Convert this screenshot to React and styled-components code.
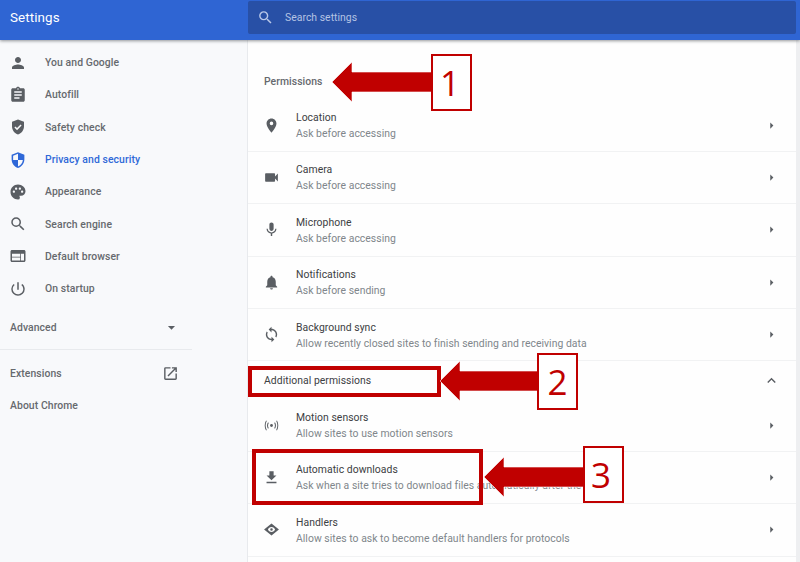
import React from "react";
import styled, { createGlobalStyle } from "styled-components";
import {
  MdPerson, MdAssignment, MdPalette, MdSearch, MdPowerSettingsNew, MdOpenInNew,
  MdLocationOn, MdVideocam, MdMic, MdNotifications, MdSync, MdFileDownload,
  MdArrowRight, MdExpandLess, MdArrowDropDown,
} from "react-icons/md";

const Global = createGlobalStyle`
  html, body { margin: 0; padding: 0; background: #fff; }
  body { font-family: Roboto, "Liberation Sans", sans-serif; overflow: hidden; }
  * { box-sizing: border-box; }
`;

const Page = styled.div`
  position: relative;
  width: 800px;
  height: 562px;
  overflow: hidden;
  display: flex;
  flex-direction: column;
`;
const Header = styled.header`
  height: 40px;
  flex: none;
  background: #2f65d3;
  display: flex;
  box-shadow: 0 1px 3px rgba(60, 64, 67, 0.55);
  position: relative;
  z-index: 2;
`;
const Brand = styled.div`
  width: 248px;
  padding: 9px 0 0 10px;
  color: #fff;
  font-size: 13.4px;
  line-height: 17px;
  letter-spacing: 0.1px;
`;
const SearchBox = styled.div`
  width: 548px;
  height: 33px;
  margin-top: 1px;
  background: #2850a6;
  border-radius: 2px;
  display: flex;
  align-items: center;
  padding-left: 9px;
  gap: 11px;
  color: #b4c3e4;
  font-size: 10.4px;
  letter-spacing: 0.03px;
  svg { color: #b9c8e8; }
`;
const Body = styled.div`
  flex: 1;
  display: flex;
  min-height: 0;
`;
const Sidebar = styled.nav`
  width: 248px;
  background: #f8f9fb;
  padding-top: 6.5px;
  border-right: 1px solid #e8eaed;
  color: #5f6368;
`;
const NavRow = styled.div`
  height: 32.3px;
  display: flex;
  align-items: center;
  padding-left: 9px;
  gap: 19px;
  font-size: 10.4px;
  font-weight: 500;
  letter-spacing: 0.08px;
  color: ${(p) => (p.$active ? "#2f68d8" : "#66696e")};
  svg { flex: none; width: 18px; height: 18px; margin-left: -0.5px; margin-right: -0.5px; color: ${(p) => (p.$active ? "#2f68d8" : "#5a5e63")}; }
`;
const PlainRow = styled.div`
  width: 192px;
  height: 32.3px;
  display: flex;
  align-items: center;
  justify-content: space-between;
  padding: 0 13px 0 10px;
  font-size: 10.4px;
  font-weight: 500;
  letter-spacing: 0.08px;
  color: #66696e;
  svg { flex: none; color: #5a5e63; }
`;
const AdvancedRow = styled(PlainRow)`
  margin-top: 6px;
  padding-right: 12px;
`;
const SideRule = styled.div`
  width: 192px;
  height: 1px;
  margin: 6px 0 7px;
  background: #e8eaed;
`;
const Main = styled.main`
  width: 548px;
  background: #fefefe;
`;
const Strip = styled.div`
  flex: 1;
  background: #eeeff1;
`;
const SectionTitle = styled.div`
  height: 59.5px;
  padding: 35px 0 0 16px;
  font-size: 10.4px;
  line-height: 13px;
  font-weight: 500;
  letter-spacing: 0.05px;
  color: #66696e;
`;
const SubHeader = styled.div`
  height: 38px;
  padding-right: 20px;
  display: flex;
  align-items: center;
  justify-content: space-between;
  svg { color: #5a5e63; margin-right: -4px; }
`;
const SubTitle = styled.div`
  padding: 1px 0 0 16px;
  font-size: 10.4px;
  letter-spacing: 0.05px;
  color: #3c4043;
`;
const Row = styled.div`
  height: 52.4px;
  padding: 0 17px 0 15px;
  display: flex;
  align-items: center;
  border-bottom: 1px solid #f1f2f3;
  position: relative;
`;
const RowIcon = styled.div`
  width: 33px;
  flex: none;
  display: flex;
  color: #5a5e63;
  svg { width: 17px; height: 17px; margin-left: -0.5px; }
`;
const RowText = styled.div`
  flex: 1;
  min-width: 0;
  padding-top: 1.5px;
`;
const RowTitle = styled.div`
  font-size: 10.4px;
  line-height: 16px;
  letter-spacing: 0.04px;
  color: #3c4043;
`;
const RowSub = styled.div`
  font-size: 10.4px;
  line-height: 16px;
  letter-spacing: 0.03px;
  color: #80868b;
  white-space: nowrap;
`;
const Caret = styled(MdArrowRight)`
  flex: none;
  width: 15px;
  height: 15px;
  color: #5a5e63;
`;

/* Red annotations lie over the page */
const Frame = styled.div`
  position: absolute;
  left: ${(p) => p.$x}px;
  top: ${(p) => p.$y}px;
  width: ${(p) => p.$w}px;
  height: ${(p) => p.$h}px;
  border: 4px solid #c00000;
  z-index: 3;
`;
const NumberBox = styled.div`
  position: absolute;
  left: ${(p) => p.$x}px;
  top: ${(p) => p.$y}px;
  width: 41px;
  height: 57px;
  border: 2.5px solid #c00000;
  background: #fff;
  color: #c00000;
  display: flex;
  align-items: center;
  justify-content: center;
  padding-right: ${(p) => p.$shift}px;
  font-family: "Open Sans", "Liberation Sans", sans-serif;
  font-size: 35px;
  line-height: 1;
  z-index: 5;
`;
const ArrowSvg = styled.svg`
  position: absolute;
  left: ${(p) => p.$x}px;
  top: ${(p) => p.$y}px;
  z-index: 4;
`;

const Arrow = ({ x, y, len = 101 }) => (
  <ArrowSvg $x={x} $y={y} width={len} height="42" viewBox={`0 0 ${len} 42`}>
    <path d={`M0 21 L20 1 V11 H${len} V31 H20 V41 Z`} fill="#c00000" stroke="#fff" strokeWidth="0.6" />
  </ArrowSvg>
);

const S = { viewBox: "0 0 24 24", fill: "currentColor" };
const ShieldCheck = () => (
  <svg {...S}><path d="M12 2 4 5v6.100c0 5 3.400 9.700 8 10.900 4.600-1.200 8-5.900 8-10.900V5l-8-3zm-1.300 14.200-3.500-3.500 1.400-1.400 2.100 2.100 4.700-4.700 1.400 1.400-6.100 6.100z" /></svg>
);
const ShieldHalf = () => (
  <svg {...S}><path d="M12 1.500 3.500 5v6c0 5.300 3.600 10.200 8.500 11.500 4.900-1.300 8.500-6.200 8.500-11.500V5L12 1.500zm0 10.500H5.500V6.300L12 3.700V12zm0 0h6.500c-.5 4-3.100 7.600-6.500 8.500V12z" /></svg>
);
const Browser = () => (
  <svg {...S}><path d="M20 4H4c-1.100 0-2 .9-2 2v12c0 1.100.9 2 2 2h16c1.100 0 2-.9 2-2V6c0-1.100-.9-2-2-2zm-5 14H4v-4h11v4zm0-5H4V9h11v4zm5 5h-4V9h4v9z" /></svg>
);
const Motion = () => (
  <svg viewBox="-3 -3 30 30" fill="currentColor"><circle cx="12" cy="12" r="2.500" />
    <path d="M7.200 7.500 5.900 6.200C3.500 9.500 3.500 14.500 5.900 17.800l1.300-1.300c-1.700-2.600-1.700-6.400 0-9zM3.700 4.200 2.400 3C-.8 7.800-.8 16.200 2.400 21l1.300-1.200C1 15.800 1 8.200 3.700 4.200zM16.800 7.500l1.300-1.300c2.400 3.300 2.400 8.300 0 11.600l-1.300-1.300c1.700-2.600 1.700-6.400 0-9zM20.300 4.200 21.600 3c3.200 4.800 3.200 13.200 0 18l-1.300-1.200c2.700-4 2.700-11.600 0-15.600z" />
  </svg>
);
const Handlers = () => (
  <svg {...S}><path fillRule="evenodd" d="M12 3.500 1.500 12 12 20.500 22.500 12 12 3.500zm0 5c2.500 0 4.200 1.500 5 3.500-.8 2-2.500 3.500-5 3.500S7.800 14 7 12c.8-2 2.500-3.500 5-3.500zm0 1.700a1.800 1.800 0 1 0 0 3.600 1.800 1.800 0 0 0 0-3.600z" /></svg>
);

const nav = [
  [MdPerson, "You and Google"],
  [MdAssignment, "Autofill"],
  [ShieldCheck, "Safety check"],
  [ShieldHalf, "Privacy and security", true],
  [MdPalette, "Appearance"],
  [MdSearch, "Search engine"],
  [Browser, "Default browser"],
  [MdPowerSettingsNew, "On startup"],
];
const permissions = [
  [MdLocationOn, "Location", "Ask before accessing"],
  [MdVideocam, "Camera", "Ask before accessing"],
  [MdMic, "Microphone", "Ask before accessing"],
  [MdNotifications, "Notifications", "Ask before sending"],
  [MdSync, "Background sync", "Allow recently closed sites to finish sending and receiving data"],
];
const additional = [
  [Motion, "Motion sensors", "Allow sites to use motion sensors"],
  [MdFileDownload, "Automatic downloads", "Ask when a site tries to download files automatically after the"],
  [Handlers, "Handlers", "Allow sites to ask to become default handlers for protocols"],
];

const SettingRow = ({ icon: Icon, title, sub }) => (
  <Row>
    <RowIcon><Icon /></RowIcon>
    <RowText>
      <RowTitle>{title}</RowTitle>
      <RowSub>{sub}</RowSub>
    </RowText>
    <Caret />
  </Row>
);

export default function App() {
  return (
    <Page>
      <Global />
      <Header>
        <Brand>Settings</Brand>
        <SearchBox><MdSearch size={17} />Search settings</SearchBox>
      </Header>
      <Body>
        <Sidebar>
          {nav.map(([Icon, label, active]) => (
            <NavRow key={label} $active={active}><Icon />{label}</NavRow>
          ))}
          <AdvancedRow>Advanced<MdArrowDropDown size={17} /></AdvancedRow>
          <SideRule />
          <PlainRow>Extensions<MdOpenInNew size={17} /></PlainRow>
          <PlainRow>About Chrome</PlainRow>
        </Sidebar>
        <Main>
          <SectionTitle>Permissions</SectionTitle>
          {permissions.map(([icon, t, s]) => <SettingRow key={t} icon={icon} title={t} sub={s} />)}
          <SubHeader>
            <SubTitle>Additional permissions</SubTitle>
            <MdExpandLess size={17} />
          </SubHeader>
          {additional.map(([icon, t, s]) => <SettingRow key={t} icon={icon} title={t} sub={s} />)}
        </Main>
        <Strip />
      </Body>
      <Arrow x={332} y={61} len={101} />
      <NumberBox $x={431} $y={54} $shift={3}>1</NumberBox>
      <Frame $x={248} $y={366} $w={193} $h={31} />
      <Arrow x={440} y={360} len={99} />
      <NumberBox $x={537} $y={353} $shift={0}>2</NumberBox>
      <Frame $x={252} $y={449} $w={231} $h={56} />
      <Arrow x={484} y={456} len={101} />
      <NumberBox $x={583} $y={446} $shift={5}>3</NumberBox>
    </Page>
  );
}
